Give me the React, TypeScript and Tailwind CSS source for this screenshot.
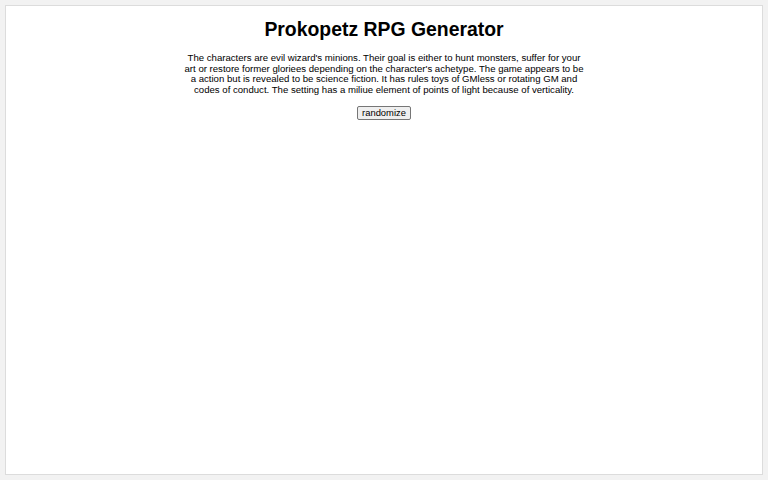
import { useState } from 'react';

const texts = [
  "The characters are evil wizard's minions. Their goal is either to hunt monsters, suffer for your art or restore former gloriees depending on the character's achetype. The game appears to be a action but is revealed to be science fiction. It has rules toys of GMless or rotating GM and codes of conduct. The setting has a miliue element of points of light because of verticality.",
];

function App() {
  const [idx, setIdx] = useState(0);

  return (
    <div className="h-[480px] bg-[#f2f2f2] p-[5px] font-['Liberation_Sans',Arial,sans-serif] text-black">
      <div className="flex h-full flex-col items-center border border-[#dcdcdc] bg-white">
        <h1 className="mt-[12px] text-[19.4px] font-bold leading-[22px]">
          Prokopetz RPG Generator
        </h1>
        <p className="mt-[13px] w-[401px] text-center text-[9.6px] leading-[10.7px]">
          {texts[idx]}
        </p>
        <button
          className="mt-[10px] rounded-[2px] border border-[#767676] bg-[#efefef] px-[4px] text-[9.4px] leading-[12px]"
          onClick={() => setIdx((idx + 1) % texts.length)}
        >
          randomize
        </button>
      </div>
    </div>
  );
}

export default App;
